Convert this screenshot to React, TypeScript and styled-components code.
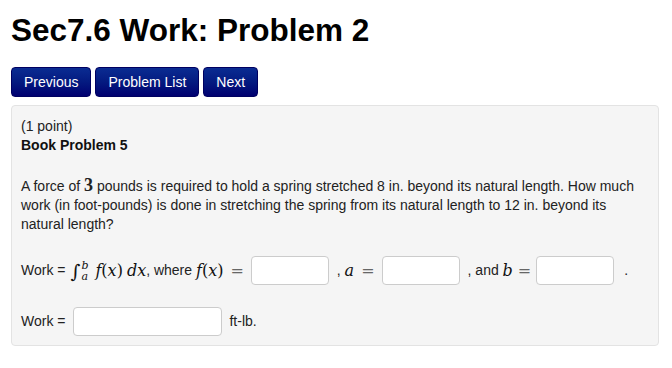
import React from "react";
import styled, { createGlobalStyle } from "styled-components";

const Global = createGlobalStyle`
  html, body { margin: 0; padding: 0; background: #ffffff; }
  body { font-family: "Liberation Sans", Arial, sans-serif; color: #000; }
`;

const Page = styled.div`
  padding: 12px 13px 0 11px;
  display: flex;
  flex-direction: column;
`;

const Title = styled.h1`
  margin: 0;
  font-size: 31.5px;
  line-height: 36px;
  font-weight: bold;
  color: #000;
`;

const Nav = styled.div`
  display: flex;
  gap: 4px;
  margin-top: 19px;
`;

const NavButton = styled.button`
  height: 30px;
  padding: 0 12px;
  border: 1px solid #000060;
  border-radius: 4px;
  background: linear-gradient(to bottom, #0a2c92 0%, #041a80 50%, #000070 100%);
  color: #fff;
  font-family: "Liberation Sans", Arial, sans-serif;
  font-size: 14px;
  line-height: 28px;
  cursor: pointer;
`;

const Panel = styled.div`
  margin-top: 8px;
  background: #f5f5f5;
  border: 1px solid #e3e3e3;
  border-radius: 4px;
  padding: 11px 9px 9px 9px;
  font-size: 14px;
  line-height: 19px;
  color: #222;
`;

const Line = styled.div<{ $bold?: boolean }>`
  font-weight: ${(p) => (p.$bold ? "bold" : "normal")};
  color: ${(p) => (p.$bold ? "#111" : "#222")};
`;

const Para = styled.p`
  margin: 21px 0 0 0;
`;

const Row = styled.div`
  display: flex;
  align-items: center;
  margin-top: 22px;
  white-space: pre;
`;

const M = styled.span<{ $size?: number }>`
  font-family: "DejaVu Serif", "Liberation Serif", serif;
  font-size: ${(p) => p.$size ?? 16}px;
  color: #111;
`;

const Num = styled.span`
  font-family: "Liberation Serif", serif;
  font-size: 18px;
  font-weight: bold;
  color: #222;
`;

const MI = styled(M)`
  font-style: italic;
`;

const Eq = styled(M)<{ $m?: number }>`
  margin: 0 ${(p) => p.$m ?? 7}px;
  color: #666;
`;

const Thin = styled.span<{ $w: number }>`
  display: inline-block;
  width: ${(p) => p.$w}px;
`;

const Integral = styled.span`
  display: inline-flex;
  align-items: center;
  margin: 0 7px 0 5px;
  font-family: "DejaVu Serif", "Liberation Serif", serif;
  color: #111;
`;

const IntSign = styled.span`
  font-size: 19px;
  font-style: italic;
  line-height: 1;
  transform: translateY(1px);
`;

const Limits = styled.span`
  display: inline-flex;
  flex-direction: column;
  font-style: italic;
  font-size: 11px;
  line-height: 11px;
  margin-left: 1px;
`;

const Input = styled.input<{ $w: number }>`
  width: ${(p) => p.$w}px;
  height: 29px;
  box-sizing: border-box;
  border: 1px solid #cccccc;
  border-radius: 4px;
  background: #fff;
  margin: 0 7px 0 0;
  padding: 0 6px;
  font-size: 14px;
`;

const Sep = styled.span<{ $l?: number }>`
  margin-left: ${(p) => p.$l ?? 0}px;
`;

export default function App() {
  return (
    <>
      <Global />
      <Page>
        <Title>Sec7.6 Work: Problem 2</Title>
        <Nav>
          <NavButton>Previous</NavButton>
          <NavButton>Problem List</NavButton>
          <NavButton>Next</NavButton>
        </Nav>
        <Panel>
          <Line>(1 point)</Line>
          <Line $bold>Book Problem 5</Line>
          <Para>
            A force of <Num>3</Num> pounds is required to hold a spring stretched 8 in. beyond its natural
            length. How much work (in foot-pounds) is done in stretching the spring from its natural
            length to 12 in. beyond its natural length?
          </Para>
          <Row>
            <span>Work =</span>
            <Integral>
              <IntSign>∫</IntSign>
              <Limits>
                <span>b</span>
                <span>a</span>
              </Limits>
            </Integral>
            <MI>f</MI>
            <M>(</M>
            <MI>x</MI>
            <M>)</M>
            <Thin $w={4} />
            <MI>dx</MI>
            <span>, where </span>
            <MI>f</MI>
            <M>(</M>
            <MI>x</MI>
            <M>)</M>
            <Eq>=</Eq>
            <Input $w={78} />
            <Sep $l={1}>, </Sep>
            <MI>a</MI>
            <Eq>=</Eq>
            <Input $w={78} />
            <Sep $l={1}>, and </Sep>
            <MI>b</MI>
            <Eq $m={5}>=</Eq>
            <Input $w={78} />
            <Sep $l={3}>.</Sep>
          </Row>
          <Row>
            <span>Work =</span>
            <Sep $l={8} />
            <Input $w={149} />
            <span>ft-lb.</span>
          </Row>
        </Panel>
      </Page>
    </>
  );
}
